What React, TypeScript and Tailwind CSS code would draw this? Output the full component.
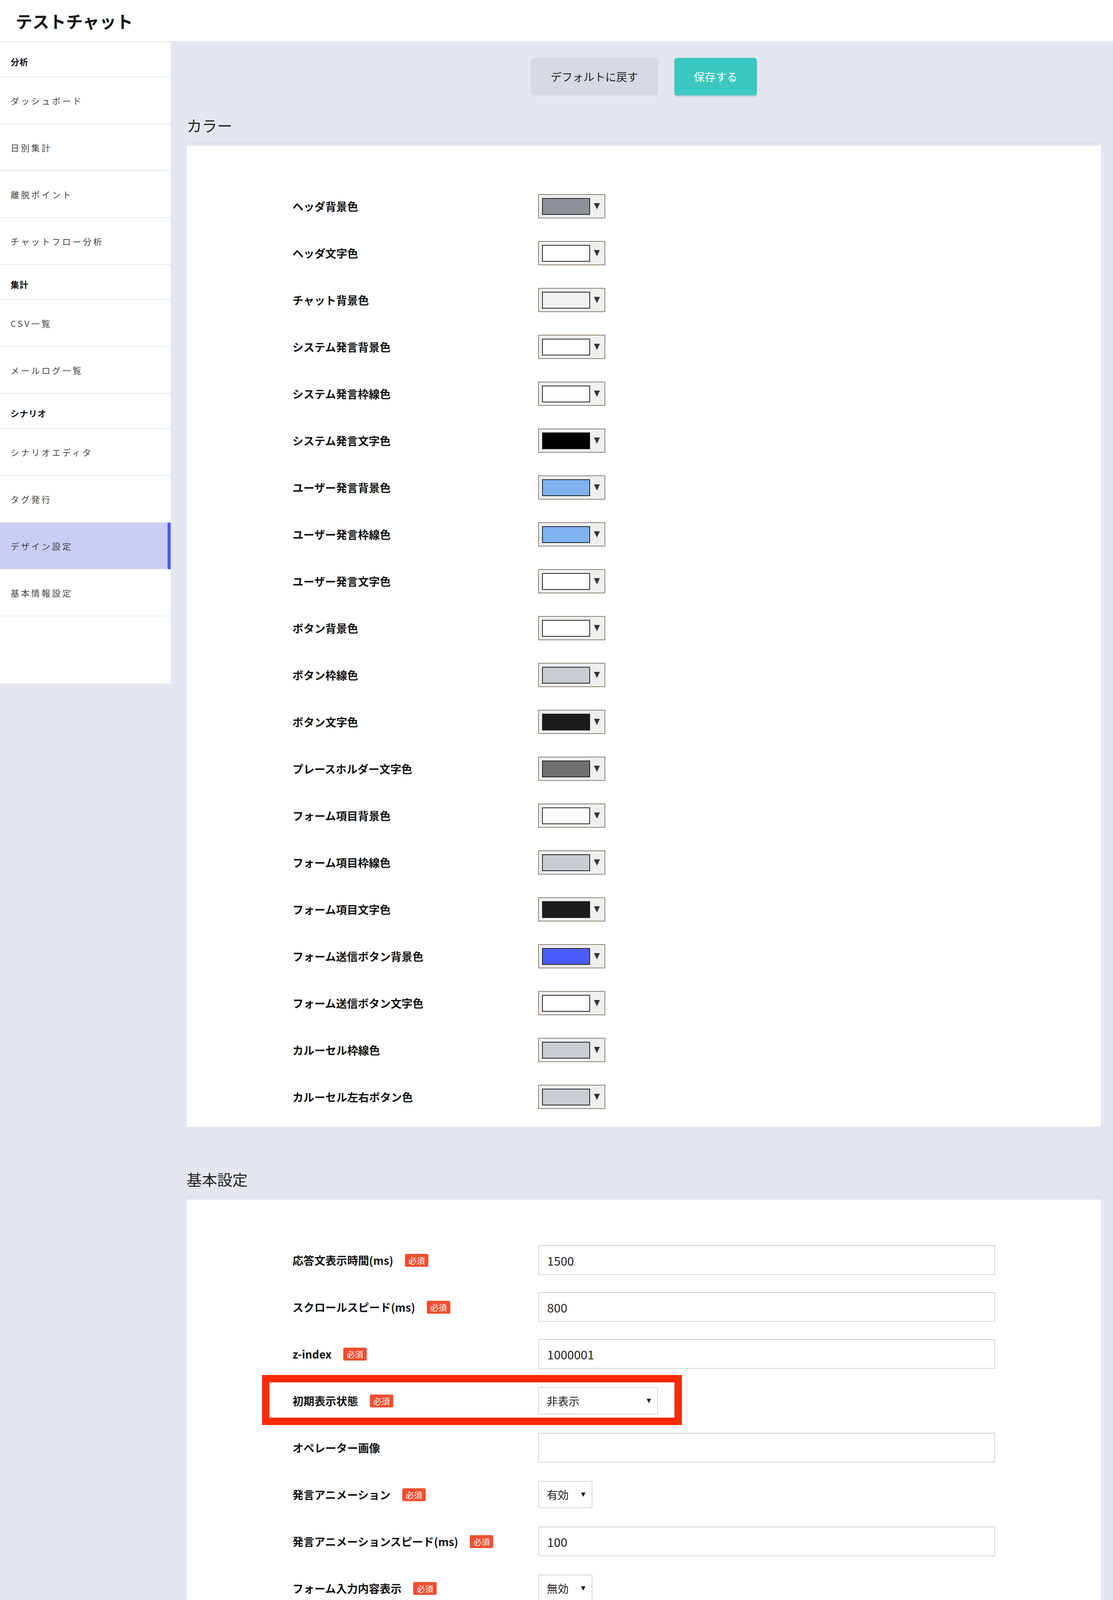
import React from "react";

type SideItem = { t: string; head?: boolean; active?: boolean };

const sideItems: SideItem[] = [
  { t: "分析", head: true },
  { t: "ダッシュボード" },
  { t: "日別集計" },
  { t: "離脱ポイント" },
  { t: "チャットフロー分析" },
  { t: "集計", head: true },
  { t: "CSV一覧" },
  { t: "メールログ一覧" },
  { t: "シナリオ", head: true },
  { t: "シナリオエディタ" },
  { t: "タグ発行" },
  { t: "デザイン設定", active: true },
  { t: "基本情報設定" },
];

const colorRows: { label: string; cls: string }[] = [
  { label: "ヘッダ背景色", cls: "bg-[#8e9197]" },
  { label: "ヘッダ文字色", cls: "bg-white" },
  { label: "チャット背景色", cls: "bg-[#f2f2f3]" },
  { label: "システム発言背景色", cls: "bg-white" },
  { label: "システム発言枠線色", cls: "bg-white" },
  { label: "システム発言文字色", cls: "bg-black" },
  { label: "ユーザー発言背景色", cls: "bg-[#7fb3ef]" },
  { label: "ユーザー発言枠線色", cls: "bg-[#7fb3ef]" },
  { label: "ユーザー発言文字色", cls: "bg-white" },
  { label: "ボタン背景色", cls: "bg-white" },
  { label: "ボタン枠線色", cls: "bg-[#c9ccd0]" },
  { label: "ボタン文字色", cls: "bg-[#1b1b1b]" },
  { label: "プレースホルダー文字色", cls: "bg-[#707070]" },
  { label: "フォーム項目背景色", cls: "bg-white" },
  { label: "フォーム項目枠線色", cls: "bg-[#c9ccd0]" },
  { label: "フォーム項目文字色", cls: "bg-[#1b1b1b]" },
  { label: "フォーム送信ボタン背景色", cls: "bg-[#4a5cfb]" },
  { label: "フォーム送信ボタン文字色", cls: "bg-white" },
  { label: "カルーセル枠線色", cls: "bg-[#c9ccd0]" },
  { label: "カルーセル左右ボタン色", cls: "bg-[#c9ccd0]" },
];

type Field = {
  label: string;
  req?: boolean;
  value?: string;
  select?: { text: string; w: string };
  mark?: boolean;
};

const basic: Field[] = [
  { label: "応答文表示時間(ms)", req: true, value: "1500" },
  { label: "スクロールスピード(ms)", req: true, value: "800" },
  { label: "z-index", req: true, value: "1000001" },
  { label: "初期表示状態", req: true, select: { text: "非表示", w: "w-[307px]" }, mark: true },
  { label: "オペレーター画像", value: "" },
  { label: "発言アニメーション", req: true, select: { text: "有効", w: "w-[139px]" } },
  { label: "発言アニメーションスピード(ms)", req: true, value: "100" },
  { label: "フォーム入力内容表示", req: true, select: { text: "無効", w: "w-[139px]" } },
];

const sp: Field[] = [
  { label: "タイトル", req: true, value: "チャットでお問い合わせ" },
  { label: "閉じた状態のデザイン", req: true, select: { text: "スマホ表示", w: "w-[222px]" } },
  { label: "閉じた状態の右からの位置", req: true, value: "10px" },
  { label: "閉じた状態の下からの位置", req: true, value: "10px" },
  { label: "開いた状態の右からの位置", req: true, value: "0px" },
  { label: "開いた状態の下からの位置", req: true, value: "0px" },
  { label: "横幅", req: true, value: "100%" },
  { label: "高さ", req: true, value: "100%" },
];

const pc: Field[] = [
  { label: "タイトル", req: true, value: "本日はどんな情報をお探しですか？" },
  { label: "閉じた状態のデザイン", req: true, select: { text: "PC表示", w: "w-[222px]" } },
  { label: "閉じた状態の右からの位置", req: true, value: "10px" },
  { label: "閉じた状態の下からの位置", req: true, value: "10px" },
  { label: "開いた状態の右からの位置", req: true, value: "10px" },
  { label: "開いた状態の下からの位置", req: true, value: "10px" },
  { label: "横幅", req: true, value: "400px" },
  { label: "高さ", req: true, value: "560px" },
];

const liff: Field[] = [
  { label: "タイトル", req: true, value: "チャットでお問い合わせ" },
  { label: "talkmationタイトルバー", req: true, select: { text: "表示する", w: "w-[222px]" } },
];

function Tri({ w, h, color }: { w: number; h: number; color: string }) {
  return (
    <svg width={w} height={h} viewBox="0 0 10 10" preserveAspectRatio="none" className="block">
      <polygon points="0,0 10,0 5,10" fill={color} />
    </svg>
  );
}

function Buttons() {
  return (
    <div className="flex justify-center gap-[42px]">
      <button className="h-[96px] w-[326px] rounded-[6px] bg-[#d7dae2] text-[28px] text-[#222]">
        デフォルトに戻す
      </button>
      <button className="h-[96px] w-[211px] rounded-[6px] bg-[#3cc8c1] text-[28px] text-white shadow-[0_3px_4px_rgba(0,0,0,0.18)]">
        保存する
      </button>
    </div>
  );
}

function Section({ title, first, children }: { title: string; first?: boolean; children: React.ReactNode }) {
  return (
    <section className={first ? "mt-[57px]" : "mt-[115px]"}>
      <div className="border-b-2 border-[#d9dce6] pb-[25px] text-[39px] leading-none text-[#222]">{title}</div>
      <div className="mt-[6px] bg-white px-[271px] pb-[16px] pt-[95px]">{children}</div>
    </section>
  );
}

function FieldRow({ f }: { f: Field }) {
  return (
    <div className="relative flex h-[120px] items-center">
      {f.mark && (
        <div className="pointer-events-none absolute left-[-78px] top-[-6px] h-[128px] w-[1075px] border-[19px] border-[#ff2a00]" />
      )}
      <div className="flex w-[629px] shrink-0 items-center">
        <span className="text-[28px] font-bold leading-none text-[#111]">{f.label}</span>
        {f.req && (
          <span className="ml-[30px] flex h-[33px] w-[60px] items-center justify-center rounded-[4px] bg-[#f04f30] text-[21px] leading-none text-white">
            必須
          </span>
        )}
      </div>
      {f.select ? (
        <div
          className={`flex h-[70px] ${f.select.w} items-center justify-between border-2 border-[#d6d6d6] bg-white pl-[20px] pr-[16px] text-[28px] text-[#222]`}
        >
          <span>{f.select.text}</span>
          <Tri w={11} h={11} color="#111" />
        </div>
      ) : (
        <input
          readOnly
          value={f.value}
          className="h-[76px] min-w-0 flex-1 border-2 border-[#d6d6d6] border-t-[#cfcfcf] bg-white px-[21px] text-[31px] text-[#222] outline-none"
        />
      )}
    </div>
  );
}

function ColorRow({ label, cls }: { label: string; cls: string }) {
  return (
    <div className="flex h-[120px] items-center">
      <div className="w-[629px] shrink-0 text-[28px] font-bold leading-none text-[#111]">{label}</div>
      <div className="flex h-[62px] w-[172px] items-center border-2 border-[#8f8172] bg-[#efefef] pl-[8px]">
        <div className={`h-[43px] w-[123px] border-2 border-[#222] ${cls}`} />
        <div className="ml-[10px]">
          <Tri w={15} h={16} color="#333" />
        </div>
      </div>
    </div>
  );
}

export default function App() {
  return (
    <div className="min-h-screen bg-[#e4e7f0] font-['Noto_Sans_CJK_JP','Noto_Sans',sans-serif]">
      <header className="flex h-[108px] items-center border-b-2 border-[#e0e1e6] bg-white pl-[40px]">
        <h1 className="text-[43px] font-bold leading-none text-[#111]">テストチャット</h1>
      </header>
      <div className="flex items-start">
        <aside className="w-[437px] shrink-0 bg-white">
          {sideItems.map((s) =>
            s.head ? (
              <div
                key={s.t}
                className="flex h-[90px] items-center border-b-2 border-[#e9e9ec] pl-[27px] pt-[10px] text-[22px] font-bold tracking-[1px] text-[#111]"
              >
                {s.t}
              </div>
            ) : s.active ? (
              <div
                key={s.t}
                className="flex h-[120px] items-center border-b-2 border-r-[8px] border-b-[#e9e9ec] border-r-[#4b5cf2] bg-[#c9cdf4] pl-[27px] text-[22px] tracking-[4.5px] text-[#444]"
              >
                {s.t}
              </div>
            ) : (
              <div
                key={s.t}
                className="flex h-[120px] items-center border-b-2 border-[#e9e9ec] pl-[27px] text-[22px] tracking-[4.5px] text-[#444]"
              >
                {s.t}
              </div>
            )
          )}
          <div className="h-[172px]" />
        </aside>
        <main className="min-w-0 flex-1 pb-[23px] pl-[41px] pr-[31px] pt-[40px]">
          <Buttons />
          <Section title="カラー" first>
            {colorRows.map((c) => (
              <ColorRow key={c.label} label={c.label} cls={c.cls} />
            ))}
          </Section>
          <Section title="基本設定">
            {basic.map((f) => (
              <FieldRow key={f.label} f={f} />
            ))}
          </Section>
          <Section title="スマホ設定">
            {sp.map((f) => (
              <FieldRow key={f.label} f={f} />
            ))}
          </Section>
          <Section title="PC設定">
            {pc.map((f) => (
              <FieldRow key={f.label} f={f} />
            ))}
          </Section>
          <Section title="LINE LIFF設定">
            {liff.map((f) => (
              <FieldRow key={f.label} f={f} />
            ))}
          </Section>
          <div className="mt-[78px]">
            <Buttons />
          </div>
        </main>
      </div>
    </div>
  );
}
